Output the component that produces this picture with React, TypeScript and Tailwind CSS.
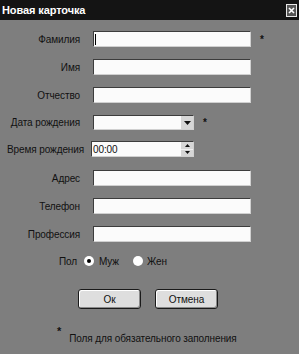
import React from 'react';

const Field: React.FC<{ label: string; mt: string; star?: boolean }> = ({ label, mt, star }) => (
  <div className={`flex items-center h-[16px] ${mt}`}>
    <div className="w-[80px] text-right whitespace-nowrap">{label}</div>
    <div className="ml-[13px] w-[158px] h-[16px] bg-[#fbfbfb] border border-t-[#3c3c3c] border-l-[#3c3c3c] border-b-[#d0d0d0] border-r-[#d0d0d0]" />
    {star && <span className="ml-[9px] font-bold">*</span>}
  </div>
);

const App: React.FC = () => {
  return (
    <div
      className="w-[299px] h-[354px] bg-[#7e7e7e] flex flex-col text-[10px] tracking-[-0.1px] text-[#111] overflow-hidden"
      style={{ fontFamily: '"Liberation Sans", Arial, sans-serif' }}
    >
      {/* title bar */}
      <div className="h-[20px] bg-[#141414] flex items-center justify-between pl-[2px] pr-[2px]">
        <span className="text-white font-bold text-[11px] tracking-[-0.1px]">Новая карточка</span>
        <div className="w-[11px] h-[13px] border border-[#e8e8e8] bg-[#555] flex items-center justify-center">
          <svg width="7" height="7" viewBox="0 0 7 7">
            <path d="M1 1 L6 6 M6 1 L1 6" stroke="#fff" strokeWidth="1.6" />
          </svg>
        </div>
      </div>

      <div className="flex flex-col">
        <div className="flex items-center h-[16px] mt-[11px]">
          <div className="w-[80px] text-right">Фамилия</div>
          <div className="ml-[13px] w-[158px] h-[16px] bg-[#fbfbfb] border border-t-[#3c3c3c] border-l-[#3c3c3c] border-b-[#d0d0d0] border-r-[#d0d0d0] flex items-center pl-[1px]">
            <div className="w-[1px] h-[11px] bg-black" />
          </div>
          <span className="ml-[9px] font-bold">*</span>
        </div>
        <Field label="Имя" mt="mt-[12px]" />
        <Field label="Отчество" mt="mt-[12px]" />

        {/* date */}
        <div className="flex items-center h-[15px] mt-[12px]">
          <div className="w-[80px] text-right whitespace-nowrap">Дата рождения</div>
          <div className="ml-[13px] w-[101px] h-[15px] bg-[#fbfbfb] border border-t-[#3c3c3c] border-l-[#3c3c3c] border-b-[#d0d0d0] border-r-[#d0d0d0] flex justify-end">
            <div className="w-[12px] h-full bg-[#d6d6d6] flex items-center justify-center">
              <svg width="7" height="4" viewBox="0 0 7 4">
                <path d="M0 0 H7 L3.5 4 Z" fill="#111" />
              </svg>
            </div>
          </div>
          <span className="ml-[9px] font-bold">*</span>
        </div>

        {/* time */}
        <div className="flex items-center h-[16px] mt-[11px]">
          <div className="w-[84px] pl-[7px] whitespace-nowrap">Время рождения</div>
          <div className="ml-[7px] w-[103px] h-[16px] bg-[#fbfbfb] border border-t-[#3c3c3c] border-l-[#3c3c3c] border-b-[#d0d0d0] border-r-[#d0d0d0] flex items-center justify-between pl-[1px]">
            <span>00:00</span>
            <div className="w-[12px] h-full flex flex-col">
              <div className="flex-1 bg-[#d6d6d6] flex items-center justify-center">
                <svg width="5" height="3" viewBox="0 0 5 3">
                  <path d="M0 3 H5 L2.5 0 Z" fill="#111" />
                </svg>
              </div>
              <div className="flex-1 bg-[#d6d6d6] flex items-center justify-center border-t border-[#f0f0f0]">
                <svg width="5" height="3" viewBox="0 0 5 3">
                  <path d="M0 0 H5 L2.5 3 Z" fill="#111" />
                </svg>
              </div>
            </div>
          </div>
        </div>

        <Field label="Адрес" mt="mt-[13px]" />
        <Field label="Телефон" mt="mt-[12px]" />
        <Field label="Профессия" mt="mt-[12px]" />

        {/* gender */}
        <div className="flex items-center h-[16px] mt-[11px]">
          <div className="w-[77px] text-right">Пол</div>
          <div className="ml-[7px] w-[10px] h-[10px] rounded-full bg-white flex items-center justify-center">
            <div className="w-[4px] h-[4px] rounded-full bg-black" />
          </div>
          <span className="ml-[5px]">Муж</span>
          <div className="ml-[14px] w-[10px] h-[10px] rounded-full bg-white" />
          <span className="ml-[4px]">Жен</span>
        </div>

        {/* buttons */}
        <div className="flex items-center mt-[20px] pl-[78px] gap-[14px]">
          <button className="w-[63px] h-[20px] bg-[#dedede] border border-[#1a1a1a] rounded-[3px] shadow-[inset_-1px_-1px_0_#8a8a8a,inset_1px_1px_0_#fff] text-[10px] font-medium">
            Ок
          </button>
          <button className="w-[63px] h-[20px] bg-[#dedede] border border-[#1a1a1a] rounded-[3px] shadow-[inset_-1px_-1px_0_#8a8a8a,inset_1px_1px_0_#fff] text-[10px] font-medium">
            Отмена
          </button>
        </div>

        {/* footnote */}
        <div className="flex mt-[17px] pl-[57px]">
          <span className="font-bold leading-[10px] text-[11px]">*</span>
          <span className="ml-[8px] mt-[5px]">Поля для обязательного заполнения</span>
        </div>
      </div>
    </div>
  );
};

export default App;
